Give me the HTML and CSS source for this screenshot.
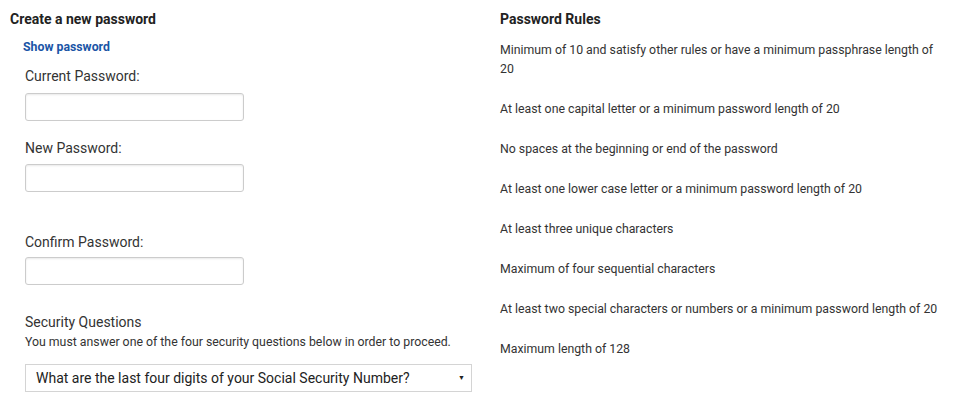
FILE: index.html
```html
<!DOCTYPE html>
<html lang="en">
<head>
<meta charset="utf-8">
<title>Create a new password</title>
<link rel="stylesheet" href="styles.css">
</head>
<body>
<div class="page">
  <section class="form-col">
    <h2 class="heading">Create a new password</h2>
    <a class="show-link" href="#">Show password</a>
    <div class="field field-current">
      <label class="label" for="cur">Current Password:</label>
      <input class="text-input" id="cur" type="password">
    </div>
    <div class="field field-new">
      <label class="label" for="new">New Password:</label>
      <input class="text-input" id="new" type="password">
    </div>
    <div class="field field-confirm">
      <label class="label" for="conf">Confirm Password:</label>
      <input class="text-input" id="conf" type="password">
    </div>
    <div class="security">
      <div class="label">Security Questions</div>
      <p class="hint">You must answer one of the four security questions below in order to proceed.</p>
      <div class="select">
        <span class="select-text">What are the last four digits of your Social Security Number?</span>
        <span class="select-arrow">&#9660;</span>
      </div>
    </div>
  </section>
  <section class="rules-col">
    <h2 class="heading">Password Rules</h2>
    <ul class="rules">
      <li>Minimum of 10 and satisfy other rules or have a minimum passphrase length of 20</li>
      <li>At least one capital letter or a minimum password length of 20</li>
      <li>No spaces at the beginning or end of the password</li>
      <li>At least one lower case letter or a minimum password length of 20</li>
      <li>At least three unique characters</li>
      <li>Maximum of four sequential characters</li>
      <li>At least two special characters or numbers or a minimum password length of 20</li>
      <li>Maximum length of 128</li>
    </ul>
  </section>
</div>
</body>
</html>
```

FILE: styles.css
```css
html, body {
  margin: 0;
  padding: 0;
  background: #fff;
}
body {
  font-family: Roboto, "Liberation Sans", Arial, sans-serif;
  color: #333;
}
.page {
  display: grid;
  grid-template-columns: 490px 1fr;
  padding: 10px 0 0 10px;
}
.heading {
  margin: 0;
  font-size: 14px;
  line-height: 18px;
  font-weight: 700;
  color: #222;
}
.show-link {
  display: block;
  margin: 11px 0 0 13px;
  font-size: 12.3px;
  line-height: 16px;
  font-weight: 700;
  color: #1a55a6;
  text-decoration: none;
}
.field {
  display: flex;
  flex-direction: column;
  align-items: flex-start;
  padding-left: 15px;
}
.field-current {
  margin-top: 11px;
}
.field-new {
  margin-top: 17px;
}
.field-confirm {
  margin-top: 40px;
}
.label {
  font-size: 14px;
  line-height: 20px;
  color: #333;
}
.text-input {
  box-sizing: border-box;
  margin-top: 6px;
  width: 219px;
  height: 28px;
  border: 1px solid #ccc;
  border-radius: 3px;
  box-shadow: inset 0 1px 2px rgba(0,0,0,0.09);
  background: #fff;
  padding: 4px 8px;
  font-size: 14px;
}
.field-current .text-input {
  margin-top: 7px;
}
.field-confirm .text-input {
  margin-top: 5px;
}
.security {
  margin-top: 27px;
  padding-left: 15px;
}
.hint {
  margin: 2px 0 0;
  font-size: 12.3px;
  line-height: 16px;
  color: #333;
}
.select {
  box-sizing: border-box;
  margin-top: 14px;
  width: 447px;
  height: 28px;
  border: 1px solid #d4d4d4;
  background: #fff;
  display: flex;
  align-items: center;
  justify-content: space-between;
  padding: 0 6px 0 10px;
}
.select-text {
  font-size: 14px;
  color: #222;
}
.select-arrow {
  font-size: 7px;
  color: #222;
}
.rules {
  list-style: none;
  margin: 13px 0 0;
  padding: 0;
  max-width: 440px;
}
.rules li {
  font-size: 12.3px;
  line-height: 19px;
  color: #333;
  margin-bottom: 21px;
}
```
